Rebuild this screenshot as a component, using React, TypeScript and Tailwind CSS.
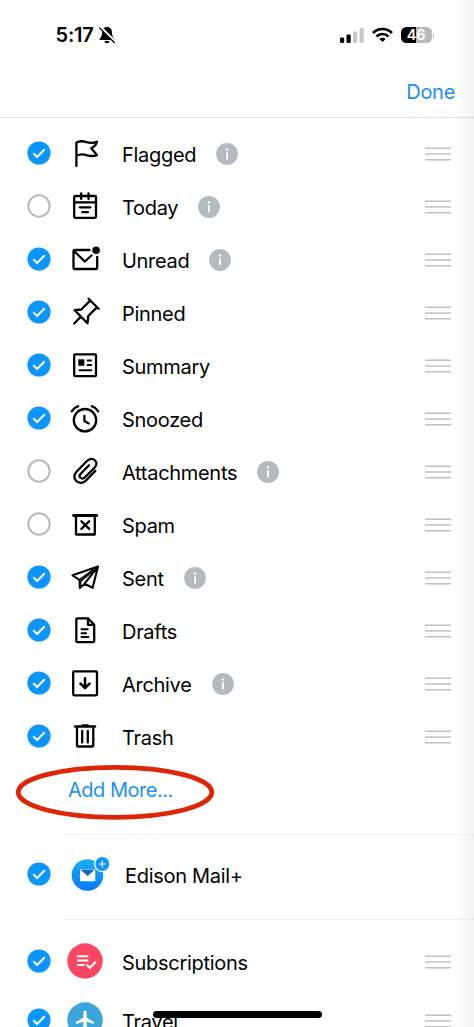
import type { ReactNode } from "react";

const ICONS: Record<string, ReactNode> = {
  flag: (
    <path d="M6.4 28V4.6C10 2.2 13.5 3.2 16.5 4.2c3.6 1.1 7 .9 10.4-.5-.6 2.8-2.6 5-5.6 6.4 1.6 2.3 3.6 4.3 5.7 7-3.5 1.3-6.500 1.2-9.8.2-3.8-1.2-7-1.6-10.800.5" />
  ),
  today: (
    <>
      <rect x="4.2" y="5" width="21.8" height="21.8" rx="1" />
      <path d="M4 11.3h22M11.2 2.3v5.7M18.5 2.3v5.7M9.8 16.3h10.6M12.3 21.2h5.6" />
    </>
  ),
  unread: (
    <>
      <path d="M19.5 6H4.5a1 1 0 0 0-1 1v17a1 1 0 0 0 1 1h21.7a1 1 0 0 0 1-1V13" />
      <path d="M4.5 7.5 14.8 17.5l6.7-6" />
      <circle cx="26.1" cy="6.3" r="3.8" fill="currentColor" stroke="none" />
    </>
  ),
  pin: (
    <path d="m18.6 1.8 10 10M20.2 3.5 11.3 12.5 4.7 13.2 17.5 26.2l.8-7.2 8.8-8.9M10.8 19.7l-6.6 6.8" />
  ),
  summary: (
    <>
      <rect x="4.2" y="4.3" width="21.8" height="21.9" rx="1" />
      <rect x="8.3" y="9.3" width="6" height="6.5" fill="currentColor" stroke="none" />
      <path d="M17.6 10.5h3.6M17.6 14.9h3.6M9.6 20.3h11.6" strokeWidth="2" />
    </>
  ),
  snooze: (
    <>
      <circle cx="15" cy="17.2" r="11.2" />
      <path d="M14.4 13V18l4.4 2.4M1.8 8.3C3.3 5.7 5.6 4 8.2 3.1M28.2 8.3C26.7 5.7 24.4 4 21.8 3.1" />
    </>
  ),
  clip: (
    <path d="M25.3 14.9 16 24.5c-3 3-7.2 3-9.8.5-2.6-2.5-2.4-6.5.3-9.3L17.2 4.8c2.4-2.4 5.7-2.6 7.7-.6 2.1 2.1 1.9 5.2-.4 7.5l-9.8 9.8c-1.4 1.4-3.2 1.4-4.3.3-1.1-1.1-1-2.8.3-4.1l8.3-8.4" />
  ),
  spam: (
    <>
      <path d="M3.6 6.5h23.1" strokeWidth="2.8" />
      <path d="M6 7v18.5h18.8V7" />
      <path d="M11.4 12.2l7.8 7.7M19.2 12.2l-7.8 7.7" />
    </>
  ),
  sent: (
    <>
      <path d="M28 4.5 2.5 13.3l7 4.7.4 7.9 4.7-4.2 8 4.1L28 4.5 9.5 18M28 4.5 14.6 21.7" strokeWidth="2.1" />
      <path d="M26.5 6 10.5 19.5v4" strokeWidth="1.6" />
    </>
  ),
  drafts: (
    <>
      <path d="M18 3.3H7.3a1 1 0 0 0-1 1v21.9a1 1 0 0 0 1 1h15.900a1 1 0 0 0 1-1V9.8L18 3.3v6.5h6" />
      <path d="M11.5 14.3h6.2M11.5 18.2h4.6M11.5 22h6.8" strokeWidth="2" />
    </>
  ),
  archive: (
    <>
      <rect x="3.2" y="3.3" width="23.8" height="24" rx="1" />
      <path d="M15 10.2v9.8M10.5 15.7l4.5 4.5 4.5-4.5" strokeWidth="2.6" />
    </>
  ),
  trash: (
    <>
      <path d="M5 5.5h20.2M12.5 4.5h5.2" />
      <path d="M7 6v18.5a1 1 0 0 0 1 1h14.3a1 1 0 0 0 1-1V6M12.2 10v11.5M17.8 10v11.5" />
    </>
  ),
};

const FOLDERS = [
  { label: "Flagged", icon: "flag", checked: true, info: true },
  { label: "Today", icon: "today", checked: false, info: true },
  { label: "Unread", icon: "unread", checked: true, info: true },
  { label: "Pinned", icon: "pin", checked: true },
  { label: "Summary", icon: "summary", checked: true },
  { label: "Snoozed", icon: "snooze", checked: true },
  { label: "Attachments", icon: "clip", checked: false, info: true },
  { label: "Spam", icon: "spam", checked: false },
  { label: "Sent", icon: "sent", checked: true, info: true },
  { label: "Drafts", icon: "drafts", checked: true },
  { label: "Archive", icon: "archive", checked: true, info: true },
  { label: "Trash", icon: "trash", checked: true },
];

function Check({ checked }: { checked: boolean }) {
  return (
    <svg viewBox="0 0 24 24" className="size-6 shrink-0">
      {checked ? (
        <>
          <circle cx="12" cy="12" r="11.6" fill="#0a95ff" />
          <path d="m6.3 12.3 3.8 3.7 7.6-7.7" fill="none" stroke="#fff" strokeWidth="2" />
        </>
      ) : (
        <circle cx="12" cy="12" r="10.7" fill="#fff" stroke="#b4babf" strokeWidth="2" />
      )}
    </svg>
  );
}

function Info() {
  return (
    <svg viewBox="0 0 22 22" className="mt-[2px] ml-5 size-[22px] shrink-0">
      <circle cx="11" cy="11" r="10.9" fill="#b3bac0" />
      <circle cx="11" cy="6.5" r="1.2" fill="#fff" />
      <path d="M11 9.3v7" stroke="#fff" strokeWidth="1.8" />
    </svg>
  );
}

// svg rather than bordered spans, so the three lines stay equally thick at any offset
function Handle() {
  return (
    <svg viewBox="0 0 26 14" className="mt-[2px] mr-[23px] ml-auto h-[14px] w-[26px] shrink-0">
      <path d="M0 1.2h26M0 7h26M0 12.8h26" stroke="#c0c0c2" strokeWidth="1.6" />
    </svg>
  );
}

function StatusBar() {
  return (
    <div className="flex h-[70px] items-center pr-10 pl-[55.5px]">
      <span className="text-[20px] font-semibold tracking-[-0.2px]">5:17</span>
      <svg viewBox="0 0 18 18" className="ml-1 size-[18px]">
        <path
          d="M9 1C5.500 1 4 3.700 4 6.500 4 10 3 11.500 1.500 13v1h15v-1C15 11.500 14 10 14 6.500 14 3.700 12.500 1 9 1ZM6.500 15h5a2.500 2.300 0 0 1-5 0Z"
        />
        <path d="m2 .8 15.5 15.5" stroke="#fff" strokeWidth="2.8" />
        <path d="m1.3 1.6 15.4 15.4" stroke="#000" strokeWidth="1.3" />
      </svg>
      <div className="ml-auto flex items-center">
        <svg viewBox="0 0 24 16" className="mt-px h-4 w-6">
          <rect x="0" y="9.5" width="4.2" height="5.5" rx="1.2" />
          <rect x="6.5" y="6.5" width="4.2" height="8.5" rx="1.2" />
          <rect x="13" y="3.5" width="4.2" height="11.5" rx="1.2" fill="#c6c6c6" />
          <rect x="19.5" y="0" width="4.2" height="15" rx="1.2" fill="#c6c6c6" />
        </svg>
        <svg viewBox="0 0 21 16" className="ml-2 h-4 w-[21px]" fill="none" stroke="#000" strokeWidth="2.7">
          <path d="M1 6a13.3 13.3 0 0 1 19 0" />
          <path d="M4.5 9.5a8.5 8.5 0 0 1 12 0" />
          <path d="M10.5 15 7.3 12a4.6 4.6 0 0 1 6.4 0Z" fill="#000" stroke="none" />
        </svg>
        <div className="ml-2 flex h-4 w-[31px] items-center justify-center rounded-[5.5px] bg-linear-to-r from-black from-48% to-[#b9b9b9] to-48% text-[14.5px] font-semibold text-white">
          46
        </div>
        <span className="ml-px h-[5px] w-[1.5px] rounded-r bg-[#b9b9b9]" />
      </div>
    </div>
  );
}

export default function App() {
  return (
    <div className="relative h-[1027px] w-[474px] overflow-hidden bg-white font-[Inter,sans-serif] text-[20px] tracking-[-0.3px] text-black">
      <StatusBar />
      <div className="flex h-12 items-center justify-end border-b border-[#e2e2e2] pr-[19px] text-[#1a8ff5]">
        <span className="-mt-[3px]">Done</span>
      </div>

      <ul className="pt-2">
        {FOLDERS.map((f) => (
          <li key={f.label} className="flex h-[53.04px] items-center pl-[26.5px]">
            <Check checked={f.checked} />
            <svg
              viewBox="0 0 30 30"
              className="mt-px ml-[19.5px] size-[30px] shrink-0"
              fill="none"
              stroke="currentColor"
              strokeWidth="2.3"
              strokeLinecap="round"
              strokeLinejoin="round"
            >
              {ICONS[f.icon]}
            </svg>
            <span className="mt-[4px] ml-[22px]">{f.label}</span>
            {f.info && <Info />}
            <Handle />
          </li>
        ))}
      </ul>

      <div className="flex h-[54.5px] items-center pt-px pl-[68px] tracking-[-0.48px] text-[#1a8ff5]">Add More...</div>

      <div className="mt-[17px] ml-[65px] border-t border-[#f0f0f0]" />
      <div className="flex h-[84px] items-center pb-[6px] pl-[26.5px]">
        <Check checked />
        <svg viewBox="0 0 42 42" className="ml-[17.5px] size-[42px] shrink-0">
          <defs>
            <linearGradient id="mail" x1="0" y1="0" x2="0" y2="1">
              <stop offset="0" stopColor="#12b2f8" />
              <stop offset="1" stopColor="#0a78fa" />
            </linearGradient>
          </defs>
          <circle cx="19.5" cy="22" r="15.8" fill="url(#mail)" />
          <rect x="12" y="16" width="15.3" height="12.3" rx="0.6" fill="#fff" />
          <path d="m12.3 16.5 7.3 6.5 7.3-6.5Z" fill="#1263c4" />
          <path d="m21 22.500 6 5.500" stroke="#c9d8ea" strokeWidth="0.7" />
          <circle cx="34.3" cy="11" r="8.3" fill="#fff" />
          <circle cx="34.3" cy="11" r="6.9" fill="#0d95fb" />
          <path d="M34.3 7.5v7M30.8 11h7" stroke="#fff" strokeWidth="1.2" />
        </svg>
        <span className="mt-[4px] ml-[15px]">Edison Mail+</span>
      </div>
      <div className="ml-[64px] border-t border-[#f0f0f0]" />

      <div className="pt-[12px]">
        <div className="flex h-[59px] items-center pl-[26.5px]">
          <Check checked />
          <svg viewBox="0 0 36 36" className="ml-[16.5px] size-9 shrink-0" fill="none" stroke="#fff" strokeWidth="2">
            <circle cx="18" cy="18" r="17.7" fill="#fc4762" stroke="none" />
            <path d="M10 13.3h11.3M10 17.6h11.3M10 21.9h7.5M19.500 21.500l3.3 3.3 6-6" />
          </svg>
          <span className="mt-[3px] ml-[19px]">Subscriptions</span>
          <Handle />
        </div>
        <div className="flex h-[59px] items-center pl-[26.5px]">
          <Check checked />
          <svg viewBox="0 0 36 36" className="ml-[16.5px] size-9 shrink-0">
            <circle cx="18" cy="18" r="17.7" fill="#3ba6db" />
            <path
              d="M18 8.500c-1 0-1.600.8-1.600 1.800v5.200L9 20v2l7.400-2.300v4.500l-2 1.500v1.500l3.600-1 3.600 1v-1.500l-2-1.500v-4.500L27 22v-2l-7.400-4.500v-5.200c0-1-.6-1.800-1.600-1.800Z"
              fill="#fff"
            />
          </svg>
          <span className="mt-[3px] ml-[19px]">Travel</span>
          <Handle />
        </div>
      </div>

      {/* hand-drawn highlight round the link */}
      <svg viewBox="0 0 200 56" className="absolute top-[764px] left-[15px] h-14 w-[200px]">
        <ellipse cx="100" cy="28.3" rx="96.8" ry="25" fill="none" stroke="#dd2608" strokeWidth="4.8" />
      </svg>
      <div className="absolute top-0 right-0 h-full w-5 bg-linear-to-r from-black/0 to-black/5" />
      <div className="absolute top-[1011px] left-[153px] h-[6.5px] w-[169px] rounded-full bg-black" />
    </div>
  );
}
